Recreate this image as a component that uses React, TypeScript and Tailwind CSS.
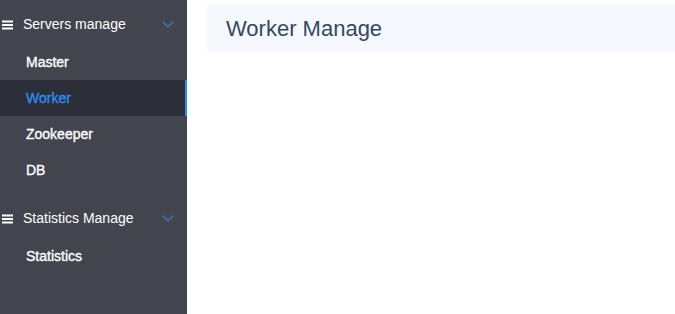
import React from "react";

function Navicon() {
  return (
    <svg width="11" height="10" viewBox="0 0 11 10" className="shrink-0">
      <rect x="0" y="0.5" width="11" height="2" fill="#ffffff" />
      <rect x="0" y="4" width="11" height="2" fill="#ffffff" />
      <rect x="0" y="7.5" width="11" height="2" fill="#ffffff" />
    </svg>
  );
}

function Chevron() {
  return (
    <svg width="12" height="7" viewBox="0 0 12 7" className="shrink-0">
      <path d="M0.8 0.8 L6 5.8 L11.2 0.8" stroke="#3b78c0" strokeWidth="1.3" fill="none" />
    </svg>
  );
}

function Group({ title, items, active }: { title: string; items: string[]; active?: string }) {
  return (
    <div>
      <div className="h-[39px] flex items-center pl-[2px] pr-[13px]">
        <Navicon />
        <span className="ml-[10px] text-[14px] text-white flex-1">{title}</span>
        <Chevron />
      </div>
      {items.map((it) => (
        <div
          key={it}
          className={
            "h-[36px] flex items-center pl-[26px] text-[14px] [-webkit-text-stroke:0.35px_currentColor] " +
            (it === active
              ? "bg-[#2c2f39] text-[#2d8cf0] border-r-[2px] border-[#2d8cf0]"
              : "text-white")
          }
        >
          {it}
        </div>
      ))}
    </div>
  );
}

export default function App() {
  return (
    <div
      className="flex w-[675px] h-[314px] bg-white overflow-hidden"
      style={{ fontFamily: '"Liberation Sans", Arial, sans-serif' }}
    >
      <div className="w-[187px] h-full bg-[#42454e] pt-[5px] flex flex-col gap-[11px] shrink-0">
        <Group title="Servers manage" items={["Master", "Worker", "Zookeeper", "DB"]} active="Worker" />
        <Group title="Statistics Manage" items={["Statistics"]} />
      </div>
      <div className="flex-1 pl-[20px] pt-[4px]">
        <div className="h-[48px] bg-[#f5f9fd] flex items-center pl-[19px]">
          <span className="text-[22px] text-[#34495e]">Worker Manage</span>
        </div>
      </div>
    </div>
  );
}
